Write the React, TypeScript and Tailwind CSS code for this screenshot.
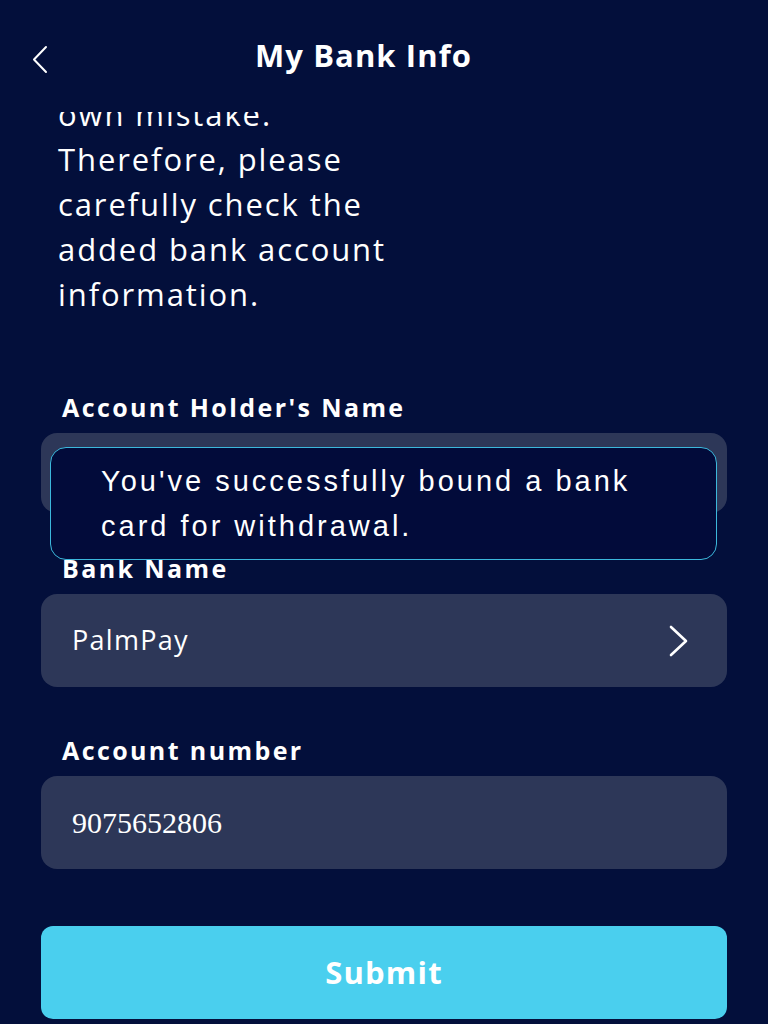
import type { ReactNode } from 'react';

const font = { fontFamily: '"Open Sans", "Noto Sans", sans-serif' };

function Label({ text, className = '' }: { text: string; className?: string }) {
  return (
    <div className={`px-[21px] text-[25px] font-bold leading-[32px] tracking-[2.4px] text-white ${className}`}>
      {text}
    </div>
  );
}

function Box({ children, className = '' }: { children?: ReactNode; className?: string }) {
  return (
    <div className={`mt-[10px] flex items-center justify-between rounded-[16px] bg-[#2d3758] px-[31px] text-white ${className}`}>
      {children}
    </div>
  );
}

export default function App() {
  return (
    <div className="relative h-[1024px] w-[768px] overflow-hidden bg-[#030f3b] text-white" style={font}>
      <header className="relative h-[112px] pr-[41px] pt-[35px] text-center">
        <button className="absolute left-[31px] top-[45px] text-white">
          <svg width="18" height="29" viewBox="0 0 18 29" fill="none">
            <path d="M15 2 L3 14.5 L15 27" stroke="white" strokeWidth="2" strokeLinecap="round" strokeLinejoin="round" />
          </svg>
        </button>
        <h1 className="text-[31px] font-bold leading-[40px] tracking-[1.1px]">My Bank Info</h1>
      </header>

      <div className="overflow-hidden">
        <p className="-mt-[20px] w-[400px] pl-[58px] text-[31px] leading-[45px] tracking-[1.9px]">
          own mistake.
          <br />
          Therefore, please
          <br />
          carefully check the
          <br />
          added bank account
          <br />
          information.
        </p>
      </div>

      <div className="px-[41px]">
        <Label text="Account Holder's Name" className="mt-[74px]" />
        <Box className="h-[80px]" />

        <Label text="Bank Name" className="mt-[39px]" />
        <Box className="h-[93px]">
          <span className="text-[27px] tracking-[1.3px]">PalmPay</span>
          <svg width="24" height="34" viewBox="0 0 24 34" fill="none" className="mr-[5px]">
            <path d="M4 3 L19 17 L4 31" stroke="white" strokeWidth="2.6" strokeLinecap="round" strokeLinejoin="round" />
          </svg>
        </Box>

        <Label text="Account number" className="mt-[47px]" />
        <Box className="h-[93px]">
          <span className="text-[30px]" style={{ fontFamily: '"Liberation Serif", serif' }}>
            9075652806
          </span>
        </Box>

        <button className="mt-[57px] flex h-[93px] w-full items-center justify-center rounded-[12px] bg-[#4acfee] text-[31px] font-bold tracking-[1.2px] text-white">
          Submit
        </button>
      </div>

      <div className="absolute left-[50px] top-[447px] flex h-[113px] w-[667px] items-center rounded-[16px] border border-[#3cb8dc] bg-[#020b3a] pl-[50px] pr-[20px]">
        <p
          className="text-[29px] leading-[45px] tracking-[3px]"
          style={{ fontFamily: '"Liberation Sans", Arial, sans-serif' }}
        >
          You've successfully bound a bank
          <br />
          card for withdrawal.
        </p>
      </div>
    </div>
  );
}
